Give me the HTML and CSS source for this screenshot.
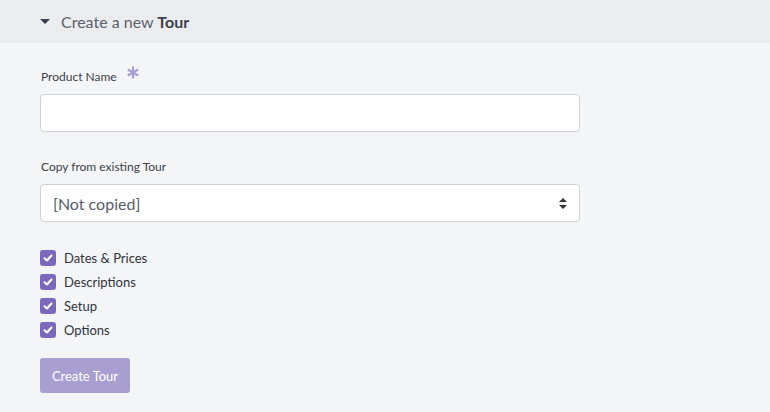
FILE: index.html
```html
<!DOCTYPE html>
<html>
<head>
<meta charset="utf-8">
<link rel="stylesheet" href="styles.css">
</head>
<body>
<div class="panel">
  <div class="panel-head">
    <span class="caret"></span>
    <span class="title">Create a new <b>Tour</b></span>
  </div>
  <div class="panel-body">
    <div class="field">
      <label class="label label-name">Product Name <svg class="req" width="12" height="13" viewBox="0 0 12 13"><g stroke="#aa9fd5" stroke-width="2.2" stroke-linecap="butt"><path d="M6 0.5 V12.5"/><path d="M0.8 3.5 L11.2 9.5"/><path d="M0.8 9.5 L11.2 3.5"/></g></svg></label>
      <div class="input"></div>
    </div>
    <div class="field field-copy">
      <label class="label label-copy">Copy from existing Tour</label>
      <div class="input select">
        <span class="select-text">[Not copied]</span>
        <svg class="arrows" width="8" height="11" viewBox="0 0 8 11"><path d="M4 0 L8 4 L0 4 Z M0 7 L8 7 L4 11 Z" fill="#333"/></svg>
      </div>
    </div>
    <ul class="checks">
      <li><span class="box"><svg width="10" height="8" viewBox="0 0 10 8"><path d="M1.5 4.2 L4 6.5 L8.5 1.5" stroke="#fff" stroke-width="2" fill="none" stroke-linecap="round" stroke-linejoin="round"/></svg></span>Dates &amp; Prices</li>
      <li><span class="box"><svg width="10" height="8" viewBox="0 0 10 8"><path d="M1.5 4.2 L4 6.5 L8.5 1.5" stroke="#fff" stroke-width="2" fill="none" stroke-linecap="round" stroke-linejoin="round"/></svg></span>Descriptions</li>
      <li><span class="box"><svg width="10" height="8" viewBox="0 0 10 8"><path d="M1.5 4.2 L4 6.5 L8.5 1.5" stroke="#fff" stroke-width="2" fill="none" stroke-linecap="round" stroke-linejoin="round"/></svg></span>Setup</li>
      <li><span class="box"><svg width="10" height="8" viewBox="0 0 10 8"><path d="M1.5 4.2 L4 6.5 L8.5 1.5" stroke="#fff" stroke-width="2" fill="none" stroke-linecap="round" stroke-linejoin="round"/></svg></span>Options</li>
    </ul>
    <button class="btn">Create Tour</button>
  </div>
</div>
</body>
</html>
```

FILE: styles.css
```css
html, body {
  margin: 0;
  padding: 0;
  background: #f4f5f7;
  font-family: Lato, "Open Sans", sans-serif;
}
.panel {
  width: 770px;
  height: 412px;
  overflow: hidden;
}
.panel-head {
  height: 43px;
  background: #ebecee;
  display: flex;
  align-items: center;
  padding-left: 40px;
  box-sizing: border-box;
}
.caret {
  width: 0;
  height: 0;
  border-left: 5px solid transparent;
  border-right: 5px solid transparent;
  border-top: 5px solid #3a3f4f;
  margin-right: 11px;
  margin-top: -1px;
}
.title {
  font-size: 16px;
  color: #5b606d;
}
.title b {
  color: #3a3f4f;
  font-weight: 700;
}
.panel-body {
  padding: 26px 40px 0 40px;
}
.field {
  width: 540px;
}
.label {
  display: flex;
  align-items: center;
  font-size: 12px;
  color: #3c3f48;
  height: 16px;
  line-height: 16px;
  margin-bottom: 9px;
  padding-left: 1px;
}
.req {
  display: block;
  margin-left: 10px;
  margin-top: -9px;
}
.input {
  height: 38px;
  background: #fff;
  border: 1px solid #cfd1d8;
  border-radius: 4px;
  box-sizing: border-box;
}
.field-copy {
  margin-top: 27px;
}
.select {
  display: flex;
  align-items: center;
  justify-content: space-between;
  padding: 0 12px 0 12px;
}
.select-text {
  font-size: 16px;
  color: #585c68;
}
.arrows {
  display: block;
}
.checks {
  list-style: none;
  margin: 28px 0 0 0;
  padding: 0;
}
.checks li {
  display: flex;
  align-items: center;
  height: 16px;
  margin-bottom: 8px;
  font-size: 13px;
  color: #2f333c;
}
.box {
  width: 16px;
  height: 16px;
  background: #7b68b9;
  border-radius: 3px;
  margin-right: 8px;
  display: flex;
  align-items: center;
  justify-content: center;
}
.btn {
  margin-top: 12px;
  width: 90px;
  height: 35px;
  background: #a99ed0;
  border: none;
  border-radius: 3px;
  color: #fff;
  font-family: Lato, "Open Sans", sans-serif;
  font-size: 13px;
  padding: 0;
}
```
